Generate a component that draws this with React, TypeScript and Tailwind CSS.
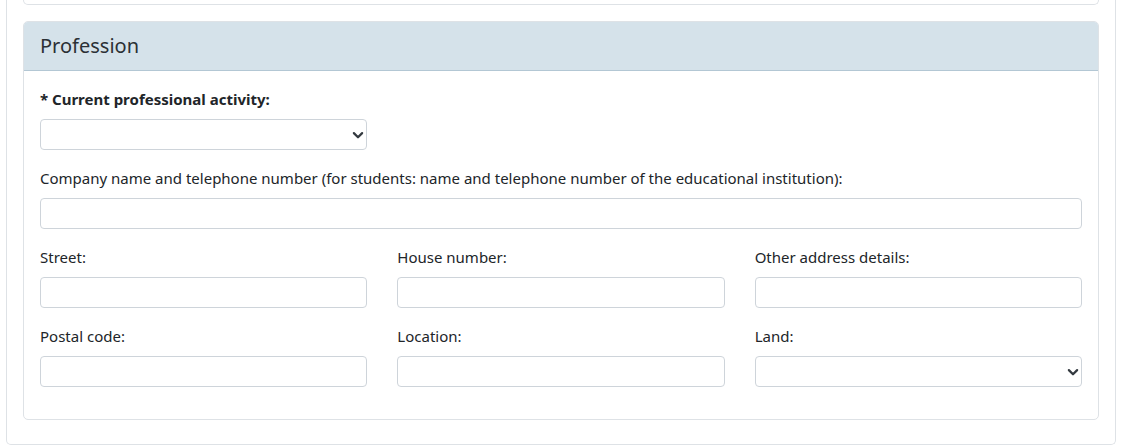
import React from "react";

const font = { fontFamily: '"Noto Sans", "Open Sans", "Liberation Sans", sans-serif' };

function Chevron() {
  return (
    <svg className="absolute right-[2px] top-1/2 -translate-y-1/2" width="12" height="12" viewBox="0 0 16 16" fill="none">
      <path d="m2.5 5.5 5.5 5.5 5.5-5.5" stroke="#343a40" strokeWidth="3" strokeLinecap="round" strokeLinejoin="round" />
    </svg>
  );
}

function Input() {
  return <div className="h-[31px] w-full rounded-[4px] border border-[#ced4da] bg-white" />;
}

function Select() {
  return (
    <div className="relative h-[31px] w-full rounded-[4px] border border-[#ced4da] bg-white">
      <Chevron />
    </div>
  );
}

function Field({ label, select }: { label: string; select?: boolean }) {
  return (
    <div className="mb-4">
      <div className="mb-2 h-6 leading-6 text-[15px] text-[#212529]">{label}</div>
      {select ? <Select /> : <Input />}
    </div>
  );
}

export default function App() {
  return (
    <div className="h-[445px] w-[1126px] overflow-hidden bg-white" style={font}>
      <div className="ml-[6px] w-[1110px] rounded-b-[5px] border-x border-b border-[#dee2e6] px-4 pb-6">
        <div className="h-[5px] rounded-b-[5px] border-x border-b border-[#dee2e6]" />
        <div className="mt-4 overflow-hidden rounded-[5px] border border-[#dee2e6]">
          <div className="flex h-[49px] items-center border-b border-[#b3c7d4] bg-[#d5e2ea] px-4">
            <span className="text-[20px] text-[#2b3035]">Profession</span>
          </div>
          <div className="px-4 pt-4 pb-4">
            <div className="mb-4">
              <div className="mb-2 h-6 leading-6 text-[15px] font-bold text-[#212529]">* Current professional activity:</div>
              <div className="w-[327px]">
                <Select />
              </div>
            </div>
            <Field label="Company name and telephone number (for students: name and telephone number of the educational institution):" />
            <div className="grid grid-cols-3 gap-x-[30px]">
              <Field label="Street:" />
              <Field label="House number:" />
              <Field label="Other address details:" />
              <Field label="Postal code:" />
              <Field label="Location:" />
              <Field label="Land:" select />
            </div>
          </div>
        </div>
      </div>
    </div>
  );
}
